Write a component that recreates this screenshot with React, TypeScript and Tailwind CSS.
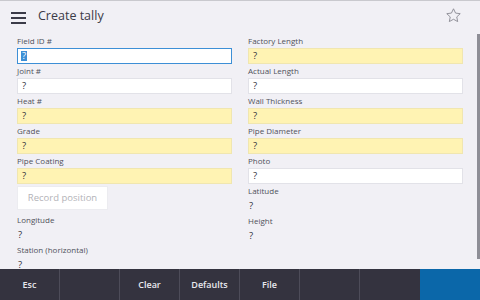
import React from "react";

const font = { fontFamily: '"Open Sans", "Noto Sans", sans-serif' };

function Label({ children }: { children: React.ReactNode }) {
  return (
    <div className="h-[14px] flex items-center text-[8px] leading-none text-[#50505b]">{children}</div>
  );
}

function Input({ yellow, focused }: { yellow?: boolean; focused?: boolean }) {
  const base = "h-[16px] flex items-center px-[3px] text-[9.5px] leading-none text-[#2d2d36]";
  if (focused)
    return (
      <div className={base + " bg-white border border-[#3d8fd6]"}>
        <span className="bg-[#3d8fd6] text-white px-[1px]">?</span>
      </div>
    );
  return (
    <div
      className={
        base +
        (yellow ? " bg-[#fff3b3] border border-[#f0e6b0]" : " bg-white border border-[#e2e2e8]")
      }
    >
      <span className="pl-[1px]">?</span>
    </div>
  );
}

function Value() {
  return <div className="h-[16px] flex items-center pl-[1px] text-[9.5px] leading-none text-[#2d2d36]">?</div>;
}

function Field({ label, yellow, focused }: { label: string; yellow?: boolean; focused?: boolean }) {
  return (
    <div>
      <Label>{label}</Label>
      <Input yellow={yellow} focused={focused} />
    </div>
  );
}

export default function App() {
  const buttons = ["Esc", "", "Clear", "Defaults", "File", "", "", ""];
  return (
    <div
      className="w-[480px] h-[300px] bg-[#f1f0f5] flex flex-col overflow-hidden relative border-t border-[#c9c9ce]"
      style={font}
    >
      <div className="h-[33px] flex items-center shrink-0 relative">
        <div className="ml-[11px] w-[15px] flex flex-col gap-[3px]">
          <div className="h-[2px] bg-[#3b3b48]" />
          <div className="h-[2px] bg-[#3b3b48]" />
          <div className="h-[2px] bg-[#3b3b48]" />
        </div>
        <div className="ml-[12px] text-[12.5px] text-[#3b3b48] leading-none mt-[-2px]">Create tally</div>
        <svg className="absolute left-[445px] top-[6px]" width="17" height="17" viewBox="0 0 24 24">
          <path
            d="M12 2.5l2.9 6.1 6.6.8-4.9 4.6 1.3 6.6L12 17.3l-5.9 3.3 1.3-6.6-4.9-4.6 6.6-.8z"
            fill="none"
            stroke="#8a8a93"
            strokeWidth="1.3"
            strokeLinejoin="round"
          />
        </svg>
      </div>
      <div className="flex-1 relative overflow-hidden">
        <div className="grid grid-cols-2 gap-x-[16px] pl-[17px] pr-[17px]">
          <div className="flex flex-col">
            <Field label="Field ID #" focused />
            <Field label="Joint #" />
            <Field label="Heat #" yellow />
            <Field label="Grade" yellow />
            <Field label="Pipe Coating" yellow />
            <div className="mt-[2px] mb-[3px] w-[91px] h-[24px] bg-white border border-[#ececf0] flex items-center justify-center text-[9.5px] text-[#b3b3b8]">
              Record position
            </div>
            <Label>Longitude</Label>
            <Value />
            <Label>Station (horizontal)</Label>
            <Value />
          </div>
          <div className="flex flex-col">
            <Field label="Factory Length" yellow />
            <Field label="Actual Length" />
            <Field label="Wall Thickness" yellow />
            <Field label="Pipe Diameter" yellow />
            <Field label="Photo" />
            <Label>Latitude</Label>
            <Value />
            <Label>Height</Label>
            <Value />
          </div>
        </div>
        <div className="absolute right-0 top-[-3px] w-[3px] h-[228px] bg-[#8e8e96]" />
      </div>
      <div className="h-[31px] shrink-0 grid grid-cols-8 bg-[#34333f]">
        {buttons.map((b, i) => (
          <div
            key={i}
            className={
              "flex items-center justify-center text-[9px] font-semibold text-[#e8e8ee] " +
              (i === 7 ? "bg-[#0b67a9]" : i < 6 ? "border-r border-[#4d4c59]" : "")
            }
          >
            {b}
          </div>
        ))}
      </div>
    </div>
  );
}
